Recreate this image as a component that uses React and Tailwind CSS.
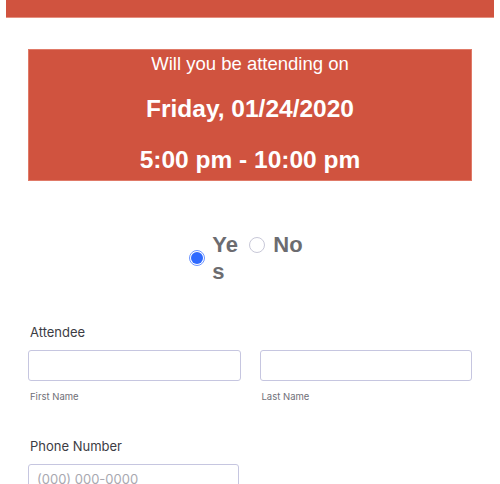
export default function App() {
  return (
    <div className="w-[500px] h-[484px] overflow-hidden bg-white">
      <div className="mx-[6px] h-[18px] bg-[#d0533f] border-b border-[#e59080]" />

      <div className="px-[28px] pt-[31px]">
        <div
          className="bg-[#d0533f] border border-[#e07a68] text-white text-center pt-[2px] pb-[6px]"
          style={{ fontFamily: '"Liberation Sans", Arial, sans-serif' }}
        >
          <p className="text-[18.5px] leading-[24px]">Will you be attending on</p>
          <p className="text-[24.5px] font-bold leading-[29px] mt-[18px]">Friday, 01/24/2020</p>
          <p className="text-[24.5px] font-bold leading-[29px] mt-[22px]">5:00 pm - 10:00 pm</p>
        </div>

        <div
          className="flex justify-center items-start mt-[50px] gap-[7px] pr-[8px]"
          style={{ fontFamily: '"Liberation Sans", Arial, sans-serif' }}
        >
          <label className="flex items-center gap-[7px]">
            <span className="w-[16px] h-[16px] rounded-full border border-[#6d95ff] flex items-center justify-center">
              <span className="w-[12px] h-[12px] rounded-full bg-[#2e69ff]" />
            </span>
            <span className="w-[30px] break-all text-[22px] font-bold leading-[27px] text-[#6c6c70]">Yes</span>
          </label>
          <label className="flex items-center gap-[8px] h-[27px]">
            <span className="w-[16px] h-[16px] rounded-full border border-[#c8c8d8] bg-white" />
            <span className="text-[22px] font-bold leading-[27px] text-[#6c6c70]">No</span>
          </label>
        </div>

        <div className="mt-[38px]" style={{ fontFamily: 'Inter, "Noto Sans", sans-serif' }}>
          <p className="text-[13px] text-[#3c3c44] leading-[18px] pl-[2px]">Attendee</p>
          <div className="grid grid-cols-2 gap-[19px] mt-[9px]">
            <div>
              <div className="h-[31px] border border-[#c6c6e0] rounded-[3px]" />
              <p className="text-[9.5px] text-[#6f6f78] mt-[9px] pl-[2px]">First Name</p>
            </div>
            <div>
              <div className="h-[31px] border border-[#c6c6e0] rounded-[3px]" />
              <p className="text-[9.5px] text-[#6f6f78] mt-[9px] pl-[2px]">Last Name</p>
            </div>
          </div>

          <p className="text-[13px] text-[#3c3c44] leading-[18px] pl-[2px] mt-[33px]">Phone Number</p>
          <div className="w-[211px] h-[31px] border border-[#c6c6e0] rounded-[3px] mt-[9px] flex items-center px-[8px]">
            <span className="text-[13px] text-[#a8a8b0]">(000) 000-0000</span>
          </div>
        </div>
      </div>
    </div>
  );
}
